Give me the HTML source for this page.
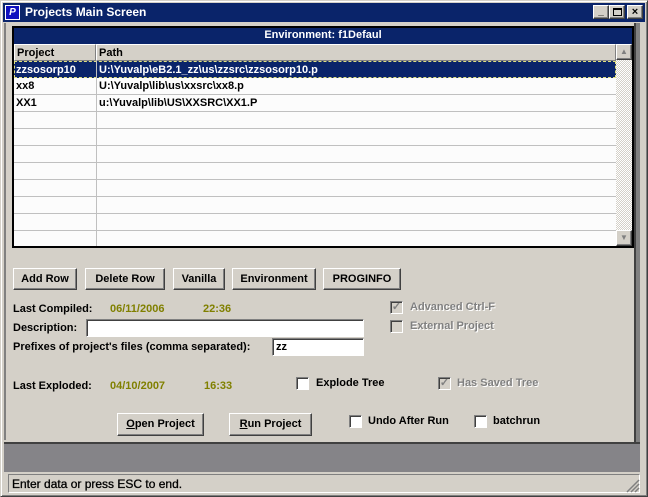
<!DOCTYPE html>
<html><head><style>
*{margin:0;padding:0;box-sizing:border-box}
body{width:648px;height:497px;background:#d4d0c8;font-family:"Liberation Sans",sans-serif;font-size:11px;font-weight:bold;position:relative;overflow:hidden;color:#000}
.a{position:absolute}
.btn{position:absolute;height:22px;background:#d4d0c8;border:1px solid;border-color:#fff #404040 #404040 #fff;box-shadow:inset -1px -1px #808080;text-align:center;line-height:20px}
.cb{position:absolute;width:13px;height:13px;background:#fff;border:1px solid;border-color:#808080 #fff #fff #808080;box-shadow:inset 1px 1px #404040}
.cb.d{background:#d4d0c8}
.inp{position:absolute;height:18px;background:#fff;border:1px solid;border-color:#808080 #fff #fff #808080;box-shadow:inset 1px 1px #404040;padding:2px 3px}
.ol{color:#808000}
.gr{color:#808080;text-shadow:1px 1px #fff}
.row{position:absolute;left:14px;width:602px;height:17px;border-bottom:1px solid #c0c0c0;background:#fcfcfc}
.row span{position:absolute;top:2px}
</style></head><body>
<div class="a" style="left:0;top:0;width:648px;height:497px;border:1px solid;border-color:#d4d0c8 #404040 #404040 #d4d0c8;box-shadow:inset 1px 1px #fff,inset -1px -1px #808080"></div>
<div class="a" style="left:3px;top:3px;width:642px;height:19px;background:#0a246a;color:#fff;font-size:12px;line-height:19px;padding-left:22px">Projects Main Screen</div>
<div class="a" style="left:5px;top:5px;width:15px;height:15px;background:#1010c0;border:1px solid #fff;color:#fff;font-size:10px;font-style:italic;text-align:center;line-height:13px">P</div>
<div class="btn" style="left:593px;top:5px;width:16px;height:14px;line-height:12px;font-size:10px">_</div>
<div class="btn" style="left:609px;top:5px;width:16px;height:14px"><div class="a" style="left:3px;top:2px;width:9px;height:8px;border:1px solid #000;border-top-width:2px"></div></div>
<div class="btn" style="left:627px;top:5px;width:16px;height:14px;line-height:12px;font-size:11px">×</div>
<div class="a" style="left:4px;top:23px;width:2px;height:417px;background:#808080"></div>
<div class="a" style="left:634px;top:23px;width:2px;height:419px;background:#404040"></div>
<div class="a" style="left:636px;top:23px;width:4px;height:449px;background:#808080"></div>
<div class="a" style="left:12px;top:26px;width:622px;height:222px;border:2px solid #000;background:#fcfcfc"></div>
<div class="a" style="left:14px;top:28px;width:618px;height:16px;background:#0a246a;color:#fff;text-align:center;line-height:15px">Environment: f1Defaul</div>
<div class="a" style="left:14px;top:44px;width:602px;height:17px;background:#d4d0c8;border-bottom:1px solid #808080"></div>
<div class="a" style="left:14px;top:44px;width:82px;height:17px;border:1px solid;border-color:#fff #808080 #808080 #fff;padding:2px 2px">Project</div>
<div class="a" style="left:96px;top:44px;width:520px;height:17px;border:1px solid;border-color:#fff #808080 #808080 #fff;padding:2px 2px">Path</div>
<div class="a" style="left:616px;top:44px;width:16px;height:202px;background:repeating-conic-gradient(#d4d0c8 0 25%,#fff 0 50%) 0 0/2px 2px"></div>
<div class="btn" style="left:616px;top:44px;width:16px;height:16px;font-size:8px;line-height:14px;color:#808080">▲</div>
<div class="btn" style="left:616px;top:230px;width:16px;height:16px;font-size:8px;line-height:14px;color:#808080">▼</div>
<div class="row" style="top:61px;background:#0a246a;color:#fff;border:1px dashed #e0e080"><span style="left:1px">zzsosorp10</span><span style="left:84px">U:\Yuvalp\eB2.1_zz\us\zzsrc\zzsosorp10.p</span></div>
<div class="row" style="top:78px"><span style="left:2px">xx8</span><span style="left:85px">U:\Yuvalp\lib\us\xxsrc\xx8.p</span></div>
<div class="row" style="top:95px"><span style="left:2px">XX1</span><span style="left:85px">u:\Yuvalp\lib\US\XXSRC\XX1.P</span></div>
<div class="row" style="top:112px"></div><div class="row" style="top:129px"></div><div class="row" style="top:146px"></div><div class="row" style="top:163px"></div><div class="row" style="top:180px"></div><div class="row" style="top:197px"></div><div class="row" style="top:214px"></div>
<div class="row" style="top:231px;border:none;height:15px"></div>
<div class="a" style="left:96px;top:61px;width:1px;height:185px;background:#c0c0c0"></div>
<div class="btn" style="left:13px;top:268px;width:64px">Add Row</div>
<div class="btn" style="left:85px;top:268px;width:80px">Delete Row</div>
<div class="btn" style="left:173px;top:268px;width:52px">Vanilla</div>
<div class="btn" style="left:232px;top:268px;width:84px">Environment</div>
<div class="btn" style="left:323px;top:268px;width:78px">PROGINFO</div>
<div class="a" style="left:13px;top:303px">Last Compiled:</div>
<div class="a ol" style="left:110px;top:303px">06/11/2006</div>
<div class="a ol" style="left:203px;top:303px">22:36</div>
<div class="a" style="left:13px;top:322px">Description:</div>
<div class="inp" style="left:86px;top:319px;width:278px"></div>
<div class="a" style="left:13px;top:341px">Prefixes of project's files (comma separated):</div>
<div class="inp" style="left:272px;top:338px;width:92px">zz</div>
<div class="cb d" style="left:390px;top:301px;color:#808080;font-size:11px;line-height:11px;text-align:center">✓</div>
<div class="a gr" style="left:410px;top:301px">Advanced Ctrl-F</div>
<div class="cb d" style="left:390px;top:320px"></div>
<div class="a gr" style="left:410px;top:320px">External Project</div>
<div class="a" style="left:13px;top:380px">Last Exploded:</div>
<div class="a ol" style="left:110px;top:380px">04/10/2007</div>
<div class="a ol" style="left:204px;top:380px">16:33</div>
<div class="cb" style="left:296px;top:377px"></div>
<div class="a" style="left:316px;top:377px">Explode Tree</div>
<div class="cb d" style="left:438px;top:377px;color:#808080;line-height:11px;text-align:center">✓</div>
<div class="a gr" style="left:457px;top:377px">Has Saved Tree</div>
<div class="btn" style="left:117px;top:413px;width:87px;height:23px"><u>O</u>pen Project</div>
<div class="btn" style="left:229px;top:413px;width:83px;height:23px"><u>R</u>un Project</div>
<div class="cb" style="left:349px;top:415px"></div>
<div class="a" style="left:368px;top:415px">Undo After Run</div>
<div class="cb" style="left:474px;top:415px"></div>
<div class="a" style="left:493px;top:415px">batchrun</div>
<div class="a" style="left:4px;top:442px;width:636px;height:30px;background:#858488;border-top:2px solid #404040"></div>
<div class="a" style="left:8px;top:474px;width:632px;height:19px;border:1px solid;border-color:#808080 #fff #fff #808080;padding:2px 3px;font-size:12px;font-weight:normal;-webkit-text-stroke:0.3px #000">Enter data or press ESC to end.</div>
<svg class="a" style="left:626px;top:479px" width="14" height="14"><path d="M13 1L1 13M13 5L5 13M13 9L9 13" stroke="#808080" stroke-width="1.5"/></svg>
</body></html>
